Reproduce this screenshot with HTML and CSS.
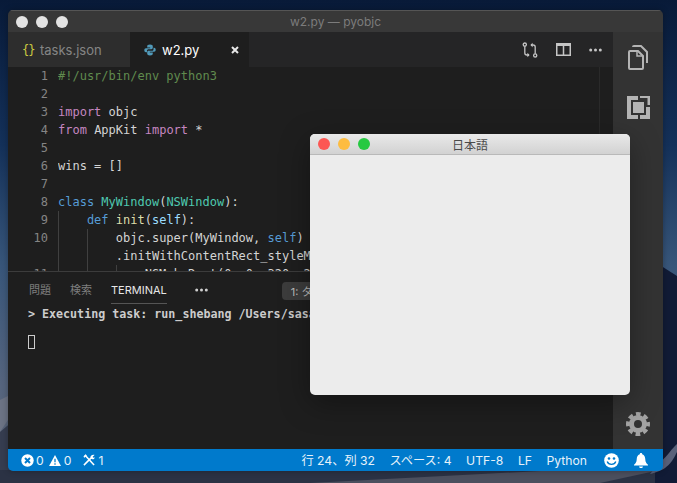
FILE: index.html
```html
<!DOCTYPE html>
<html lang="ja">
<head>
    <meta charset="UTF-8">
    <title>w2.py — pyobjc</title>
    <link rel="stylesheet" href="styles.css">
</head>

<body>
    <svg class="wallpaper" viewBox="0 0 677 483" preserveAspectRatio="none">
        <defs>
            <linearGradient id="sky" x1="0" y1="0" x2="0" y2="1">
                <stop offset="0" stop-color="#081a38"/>
                <stop offset="0.3" stop-color="#14315a"/>
                <stop offset="0.55" stop-color="#38567a"/>
                <stop offset="0.8" stop-color="#56657e"/>
                <stop offset="1" stop-color="#5a6272"/>
            </linearGradient>
        </defs>
        <rect width="677" height="483" fill="url(#sky)"/>
        <path d="M0 400 L8 396 L8 420 L0 432 Z" fill="#6c7384"/>
        <path d="M0 432 L20 415 L20 483 L0 483 Z" fill="#363d50"/>
        <path d="M0 470 H677 V483 H0 Z" fill="#2b3244"/>
        <path d="M310 483 L560 470 L660 470 L600 483 Z" fill="#4b4f5e"/>
        <path d="M655 262 L677 276 V483 H655 Z" fill="#111b36"/>
        <path d="M660 462 C668 456 672 448 677 444 V452 C672 462 668 470 650 474 Z" fill="#59617a"/>
    </svg>

    <div class="workbench">
        <div class="titlebar">
            <span class="light"></span><span class="light"></span><span class="light"></span>
            <div class="title">w2.py — pyobjc</div>
        </div>

        <div class="middle">
            <div class="main">
                <div class="tabs">
                    <div class="tab">
                        <span class="json-icon">{}</span>
                        <span>tasks.json</span>
                    </div>
                    <div class="tab active">
                        <svg class="py-icon" viewBox="0 0 12 12">
                            <path d="M6 0.5 C4 0.5 3.2 1.2 3.2 2.4 V3.6 H6.2 V4.2 H2 C0.8 4.2 0.3 5 0.3 6.2 C0.3 7.4 0.9 8.2 2 8.2 H3 V6.8 C3 5.8 3.7 5.2 4.6 5.2 H7.4 C8.2 5.2 8.8 4.6 8.8 3.8 V2.4 C8.8 1.2 7.8 0.5 6 0.5 Z" fill="#519aba"/>
                            <path d="M6 11.5 C8 11.5 8.8 10.8 8.8 9.6 V8.4 H5.8 V7.8 H10 C11.2 7.8 11.7 7 11.7 5.8 C11.7 4.6 11.1 3.8 10 3.8 H9.5 V5.2 C9.5 6.2 8.8 6.8 7.9 6.8 H4.6 C3.8 6.8 3.2 7.4 3.2 8.2 V9.6 C3.2 10.8 4.2 11.5 6 11.5 Z" fill="#519aba"/>
                        </svg>
                        <span>w2.py</span>
                        <svg class="close-icon" viewBox="0 0 8 8"><path d="M1 1 L7 7 M7 1 L1 7" stroke="#e8e8e8" stroke-width="2"/></svg>
                    </div>
                    <div class="tab-actions">
                        <svg width="16" height="16" viewBox="0 0 16 16" fill="none" stroke="#c5c5c5" stroke-width="1.3">
                            <circle cx="2.8" cy="2.6" r="1.6"/>
                            <path d="M2.8 4.2 V11 C2.8 12.5 3.6 13 5 13 H7"/>
                            <path d="M7.6 13 L5.4 10.8 V15.2 Z" fill="#c5c5c5" stroke="none"/>
                            <circle cx="13.2" cy="13.4" r="1.6"/>
                            <path d="M13.2 11.8 V5 C13.2 3.5 12.4 3 11 3 H9"/>
                            <path d="M8.4 3 L10.6 0.8 V5.2 Z" fill="#c5c5c5" stroke="none"/>
                        </svg>
                        <svg width="15" height="13" viewBox="0 0 15 13" fill="none" stroke="#c5c5c5">
                            <rect x="0.75" y="0.75" width="13.5" height="11.5" stroke-width="1.5"/>
                            <path d="M0 1.5 H15" stroke-width="3"/>
                            <path d="M7.5 1 V12" stroke-width="1.5"/>
                        </svg>
                        <svg width="13" height="4" viewBox="0 0 13 4" fill="#c5c5c5">
                            <circle cx="1.7" cy="2" r="1.5"/><circle cx="6.5" cy="2" r="1.5"/><circle cx="11.3" cy="2" r="1.5"/>
                        </svg>
                    </div>
                </div>

                <div class="editor">
                    <div class="gutter">
                        <div>1</div><div>2</div><div>3</div><div>4</div><div>5</div><div>6</div>
                        <div>7</div><div>8</div><div>9</div><div>10</div><div>&nbsp;</div><div>11</div>
                    </div>
                    <div class="code">
                        <div class="line"><span class="cm">#!/usr/bin/env python3</span></div>
                        <div class="line"></div>
                        <div class="line"><span class="kw">import</span> objc</div>
                        <div class="line"><span class="kw">from</span> AppKit <span class="kw">import</span> *</div>
                        <div class="line"></div>
                        <div class="line">wins = []</div>
                        <div class="line"></div>
                        <div class="line"><span class="st">class</span> <span class="ty">MyWindow</span>(<span class="ty">NSWindow</span>):</div>
                        <div class="line"><i class="guide"></i><span class="st">def</span> <span class="fn">init</span>(<span class="pa">self</span>):</div>
                        <div class="line"><i class="guide"></i><i class="guide"></i>objc.super(MyWindow, <span class="st">self</span>)</div>
                        <div class="line"><i class="guide"></i><i class="guide"></i>.initWithContentRect_styleMask_backing_defer_(</div>
                        <div class="line"><i class="guide"></i><i class="guide"></i><i class="guide"></i>NSMakeRect(0, 0, 320, 240),</div>
                    </div>
                    <div class="ruler"></div>
                </div>

                <div class="panel">
                    <div class="panel-tabs">
                        <span class="panel-tab">問題</span>
                        <span class="panel-tab">検索</span>
                        <span class="panel-tab current">TERMINAL</span>
                        <svg class="panel-more" width="13" height="4" viewBox="0 0 13 4" fill="#d0d0d0">
                            <circle cx="1.7" cy="2" r="1.5"/><circle cx="6.5" cy="2" r="1.5"/><circle cx="11.3" cy="2" r="1.5"/>
                        </svg>
                        <span class="task-select">1: タスク</span>
                    </div>
                    <div class="terminal">
                        <div class="term-line">&gt; Executing task: run_shebang /Users/sasaplus1/w2.py &lt;</div>
                        <div class="term-line"></div>
                        <div class="term-line"><span class="cursor"></span></div>
                    </div>
                </div>
            </div>

            <div class="activity">
                <svg width="22" height="26" viewBox="0 0 22 26" fill="none" stroke="#b4b4b4" stroke-width="2">
                    <path d="M2 8 Q2 7 3 7 H11 L16 12 V24 Q16 25 15 25 H3 Q2 25 2 24 Z"/>
                    <path d="M6 3 Q6 2 7 2 H14 L20 8 V19"/>
                    <path d="M10 7 V12 H16" stroke-width="1.5"/>
                </svg>
                <svg class="ext-icon" width="23" height="23" viewBox="0 0 23 23" fill="#b4b4b4">
                    <path d="M0 0 H11 V4 H4 V19 H11 V23 H0 Z"/>
                    <path d="M13 0 H23 V9 H20.5 V2 H13 Z"/>
                    <path d="M13 19 H19 V11 H23 V23 H13 Z"/>
                    <rect x="6" y="6" width="11" height="11"/>
                </svg>
                <svg class="gear" width="24" height="24" viewBox="0 0 24 24" fill="none" stroke="#a3a3a3">
                    <circle cx="12" cy="12" r="6.5" stroke-width="5"/>
                    <circle cx="12" cy="12" r="10" stroke-width="4" stroke-dasharray="4.6 3.25" stroke-dashoffset="2.3"/>
                </svg>
            </div>
        </div>

        <div class="statusbar">
            <div class="status-group">
                <svg width="13" height="13" viewBox="0 0 13 13">
                    <circle cx="6.5" cy="6.5" r="6.2" fill="#fff"/>
                    <path d="M4 4 L9 9 M9 4 L4 9" stroke="#007acc" stroke-width="2"/>
                </svg>
                <span class="count">0</span>
                <svg class="warn" width="12" height="11" viewBox="0 0 13 12">
                    <path d="M6.5 0 L13 12 H0 Z" fill="#fff"/>
                    <path d="M6.5 4 V8 M6.5 9 V10.5" stroke="#007acc" stroke-width="1.4"/>
                </svg>
                <span class="count warn-count">0</span>
                <svg class="tools" width="12" height="12" viewBox="0 0 13 13" fill="none" stroke="#fff">
                    <path d="M2 1 L12 12" stroke-width="1.7"/>
                    <path d="M1 3.5 L3.5 1" stroke-width="1.7"/>
                    <path d="M1 12 L8.5 4.5" stroke-width="1.7"/>
                    <path d="M8 5 C7.5 2.5 9.5 0.5 12.5 1 L10.5 3 L11 4 L12.5 3.5 C13 5.5 10.5 6.5 8 5 Z" fill="#fff" stroke="none"/>
                </svg>
                <span class="count warn-count">1</span>
            </div>
            <div class="status-group right">
                <span>行 24、列 32</span>
                <span>スペース: 4</span>
                <span>UTF-8</span>
                <span>LF</span>
                <span>Python</span>
                <svg class="smile" width="15" height="15" viewBox="0 0 15 15">
                    <circle cx="7.5" cy="7.5" r="7.3" fill="#fff"/>
                    <circle cx="5" cy="5.5" r="1.3" fill="#007acc"/><circle cx="10" cy="5.5" r="1.3" fill="#007acc"/>
                    <path d="M3.2 8.5 C4.5 12.2 10.5 12.2 11.8 8.5" fill="none" stroke="#007acc" stroke-width="1.3"/>
                </svg>
                <svg class="bell" width="14" height="15" viewBox="0 0 14 15" fill="#fff">
                    <path d="M7 0 C7.8 0 8.2 0.5 8.2 1.2 C10.5 2 11.2 4 11.3 6.5 C11.4 9 12.3 10.5 14 11.8 V12.6 H0 V11.8 C1.7 10.5 2.6 9 2.7 6.5 C2.8 4 3.5 2 5.8 1.2 C5.8 0.5 6.2 0 7 0 Z"/>
                    <path d="M5 13.4 H9 C8.8 14.5 8 15 7 15 C6 15 5.2 14.5 5 13.4 Z"/>
                </svg>
            </div>
        </div>
    </div>

    <div class="native-window">
        <div class="native-title">
            <span class="dot red"></span><span class="dot yellow"></span><span class="dot green"></span>
            <div class="native-name">日本語</div>
        </div>
    </div>
</body>
</html>
```

FILE: styles.css
```css
html, body {
    margin: 0;
    height: 483px;
    overflow: hidden;
}

body {
    position: relative;
    padding: 10px 0 0 8px;
    box-sizing: border-box;
    font-family: Inter, "Noto Sans CJK JP", sans-serif;
}

.wallpaper {
    position: absolute;
    left: 0;
    top: 0;
    width: 677px;
    height: 483px;
}

.workbench {
    position: relative;
    width: 655px;
    height: 461px;
    display: flex;
    flex-direction: column;
    border-radius: 5px;
    overflow: hidden;
    box-shadow: 0 0 6px rgba(0, 0, 0, 0.3);
}

/* window title */
.titlebar {
    position: relative;
    height: 22px;
    flex: none;
    display: flex;
    align-items: center;
    gap: 8px;
    padding-left: 8px;
    background: #383838;
    border-top: 1px solid #555;
    box-sizing: border-box;
}

.light {
    width: 12px;
    height: 12px;
    border-radius: 50%;
    background: #e4e4e4;
}

.title {
    position: absolute;
    left: 0;
    right: 0;
    text-align: center;
    font-size: 12px;
    color: #7c7c7c;
}

.middle {
    flex: 1;
    display: flex;
    min-height: 0;
}

.main {
    width: 605px;
    display: flex;
    flex-direction: column;
    background: #1e1e1e;
}

/* tabs */
.tabs {
    height: 35px;
    flex: none;
    display: flex;
    background: #252526;
}

.tab {
    width: 122px;
    display: flex;
    align-items: center;
    padding-left: 14px;
    box-sizing: border-box;
    font-size: 13px;
    color: #858585;
    background: #2d2d2d;
}

.tab.active {
    width: 119px;
    color: #fff;
    background: #1e1e1e;
}

.json-icon {
    width: 18px;
    font-family: "DejaVu Sans Mono", monospace;
    font-size: 12px;
    color: #cbcb41;
    letter-spacing: -1px;
}

.py-icon {
    width: 12px;
    height: 12px;
    margin-right: 6px;
}

.close-icon {
    width: 8px;
    height: 8px;
    margin-left: 32px;
}

.tab-actions {
    flex: 1;
    display: flex;
    align-items: center;
    justify-content: flex-end;
    gap: 18px;
    padding-right: 11px;
}

/* editor */
.editor {
    position: relative;
    height: 204px;
    flex: none;
    display: flex;
    overflow: hidden;
    font-family: "DejaVu Sans Mono", monospace;
    font-size: 12px;
    line-height: 18px;
    color: #d4d4d4;
}

.gutter {
    width: 40px;
    flex: none;
    text-align: right;
    color: #858585;
}

.code {
    flex: 1;
    margin-left: 10px;
    overflow: hidden;
}

.line {
    height: 18px;
    white-space: pre;
}

.guide {
    display: inline-block;
    width: 28.9px;
    height: 18px;
    vertical-align: top;
    box-shadow: inset 1px 0 0 #404040;
}

.ruler {
    position: absolute;
    right: 0;
    top: 0;
    bottom: 0;
    width: 13px;
    background: #1e1e1e;
    border-left: 1px solid #2a2a2a;
}

.cm { color: #608b4e; }
.kw { color: #c586c0; }
.st { color: #569cd6; }
.ty { color: #4ec9b0; }
.fn { color: #dcdcaa; }
.pa { color: #9cdcfe; }

/* panel */
.panel {
    flex: 1;
    min-height: 0;
    border-top: 1px solid #3c3c3c;
    overflow: hidden;
}

.panel-tabs {
    height: 33px;
    display: flex;
    align-items: flex-start;
    padding-left: 21px;
    font-size: 11px;
}

.panel-tab {
    margin-right: 19px;
    padding: 11px 0 5px;
    line-height: 15px;
    color: #7f7f7f;
}

.panel-tab.current {
    color: #e7e7e7;
    border-bottom: 1px solid #555;
}

.panel-more {
    margin: 16px 0 0 9px;
}

.task-select {
    width: 70px;
    height: 18px;
    margin: 10px 0 0 74px;
    padding-left: 9px;
    border-radius: 4px;
    background: #3c3c3c;
    line-height: 20px;
    color: #bbb;
    white-space: nowrap;
}

.terminal {
    padding: 2px 0 0 20px;
    font-family: "DejaVu Sans Mono", monospace;
    font-size: 11.67px;
    font-weight: bold;
    line-height: 14px;
    color: #ccc;
}

.term-line {
    height: 14px;
    white-space: pre;
}

.cursor {
    display: block;
    width: 5px;
    height: 12px;
    border: 1px solid #ccc;
}

/* right side bar */
.activity {
    flex: 1;
    display: flex;
    flex-direction: column;
    align-items: center;
    padding-top: 12px;
    background: #333;
}

.ext-icon {
    margin-top: 26px;
}

.gear {
    margin-top: auto;
    margin-bottom: 13px;
}

/* status bar */
.statusbar {
    height: 22px;
    flex: none;
    display: flex;
    justify-content: space-between;
    align-items: center;
    padding: 0 15px 0 13px;
    background: #007acc;
    color: #e6f2fa;
    font-size: 12.2px;
}

.status-group {
    display: flex;
    align-items: center;
}

.status-group.right {
    gap: 14.5px;
}

.count {
    margin-left: 2px;
}

.warn-count {
    margin-left: 3px;
}

.warn {
    margin-left: 5px;
}

.tools {
    margin-left: 12px;
}

.smile {
    margin-left: 2px;
}

.bell {
    margin-left: 1px;
}

/* the little cocoa window on top */
.native-window {
    position: absolute;
    left: 310px;
    top: 134px;
    width: 320px;
    height: 261px;
    border-radius: 5px;
    background: #ececec;
    box-shadow: 0 8px 30px rgba(0, 0, 0, 0.35);
    overflow: hidden;
}

.native-title {
    position: relative;
    height: 20px;
    display: flex;
    align-items: center;
    gap: 8px;
    padding-left: 8px;
    background: linear-gradient(#e9e9e9, #d2d2d2);
    border-bottom: 1px solid #b9b9b9;
}

.dot {
    width: 12px;
    height: 12px;
    border-radius: 50%;
}

.red { background: #fc5753; }
.yellow { background: #fdbc40; }
.green { background: #26c941; }

.native-name {
    position: absolute;
    left: 0;
    right: 0;
    text-align: center;
    font-size: 12px;
    color: #4a4a4a;
}
```
